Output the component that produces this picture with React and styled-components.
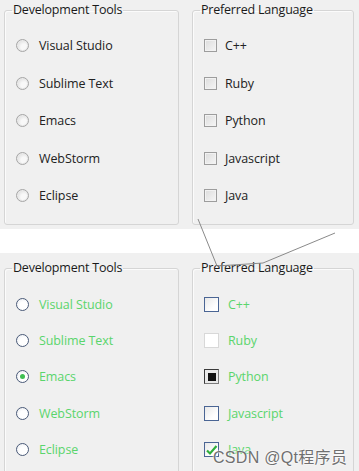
import React from "react";
import styled, { createGlobalStyle, css } from "styled-components";

const Global = createGlobalStyle`
  html, body {
    margin: 0;
    padding: 0;
    background: #ffffff;
  }
  body {
    font-family: "Open Sans", "Liberation Sans", sans-serif;
  }
`;

const Page = styled.div`
  position: relative;
  width: 359px;
  height: 471px;
  overflow: hidden;
  background: #ffffff;
`;

const Panel = styled.div`
  background: #f0f0f0;
  height: ${(p) => p.h}px;
  padding: ${(p) => p.top}px 6px 0 4px;
  box-sizing: border-box;
  display: grid;
  grid-template-columns: 175px 162px;
  column-gap: 13px;
  align-items: start;
`;

const Gap = styled.div`
  height: 24px;
  background: #ffffff;
`;

const Group = styled.fieldset`
  margin: 0;
  min-width: 0;
  border: 1px solid #d5d5d5;
  border-radius: 3px;
  box-shadow: inset 1px 1px 0 #fbfbfb;
  padding: ${(p) => p.pt}px 0 ${(p) => p.pb}px 7px;
`;

const Title = styled.legend`
  padding: 0 1px;
  font-size: 12.5px;
  line-height: 16px;
  color: #1a1a1a;
  letter-spacing: -0.2px;
`;

const List = styled.div`
  display: flex;
  flex-direction: column;
`;

const Row = styled.div`
  height: ${(p) => p.rh}px;
  display: flex;
  align-items: center;
  gap: ${(p) => p.gap}px;
  padding-left: ${(p) => p.indent}px;
`;

const Label = styled.span`
  font-size: 12.5px;
  letter-spacing: -0.1px;
  color: ${(p) => (p.green ? "#5ad56c" : "#222222")};
`;

const Radio = styled.span`
  width: 13px;
  height: 13px;
  border-radius: 50%;
  box-sizing: border-box;
  display: flex;
  align-items: center;
  justify-content: center;
  flex: none;
  ${(p) =>
    p.modern
      ? css`
          border: 1.5px solid #4a5a78;
          background: radial-gradient(circle at 60% 60%, #ffffff 40%, #e6e9ee 100%);
        `
      : css`
          border: 1px solid #a6a6a6;
          background: radial-gradient(circle at 65% 65%, #f8f8f8 30%, #d2d2d2 100%);
          box-shadow: inset 0 0 0 1px #eaeaea;
        `}
`;

const Dot = styled.span`
  width: 5px;
  height: 5px;
  border-radius: 50%;
  background: #3fbf52;
`;

const boxStyles = {
  plain: css`
    border: 1px solid #9d9d9d;
    background: linear-gradient(135deg, #dcdcdc 0%, #f6f6f6 100%);
    box-shadow: inset 0 0 0 1px #f2f2f2;
  `,
  blue: css`
    border: 1.5px solid #4a6594;
    background: linear-gradient(135deg, #e8e8e8 0%, #ffffff 70%);
  `,
  faint: css`
    border: 1px solid #d8d8d8;
    background: #ffffff;
  `,
  partial: css`
    border: 1px solid #7c7c7c;
    border-top-color: #3a3a3a;
    border-left-color: #3a3a3a;
    background: #e9e9e9;
  `,
};

const Check = styled.span`
  position: relative;
  width: ${(p) => (p.small ? 13 : 15)}px;
  height: ${(p) => (p.small ? 13 : 15)}px;
  box-sizing: border-box;
  flex: none;
  display: flex;
  align-items: center;
  justify-content: center;
  ${(p) => boxStyles[p.kind]}
`;

const Fill = styled.span`
  width: 8px;
  height: 8px;
  background: #111111;
`;

const Tick = styled.svg`
  position: absolute;
  left: 0px;
  top: 1px;
  width: 13px;
  height: 12px;
`;

const Pointer = styled.svg`
  position: absolute;
  left: 0;
  top: 0;
  width: 359px;
  height: 471px;
  pointer-events: none;
`;

const Watermark = styled.div`
  position: absolute;
  left: 213px;
  top: 444px;
  font-family: "Liberation Sans", "Noto Sans CJK SC", sans-serif;
  font-size: 16px;
  color: #707070;
  letter-spacing: 0.3px;
  text-shadow: 0 0 2px #ffffff, 0 0 2px #ffffff;
`;

const tools = ["Visual Studio", "Sublime Text", "Emacs", "WebStorm", "Eclipse"];
const langs = ["C++", "Ruby", "Python", "Javascript", "Java"];
const modernBoxes = ["blue", "faint", "partial", "blue", "blue"];

export default function App() {
  return (
    <Page>
      <Global />
      <Panel h={229} top={2}>
        <Group pt={9} pb={9}>
          <Title>Development Tools</Title>
          <List>
            {tools.map((t) => (
              <Row key={t} rh={37.5} gap={10} indent={4}>
                <Radio />
                <Label>{t}</Label>
              </Row>
            ))}
          </List>
        </Group>
        <Group pt={9} pb={9}>
          <Title>Preferred Language</Title>
          <List>
            {langs.map((l) => (
              <Row key={l} rh={37.5} gap={8} indent={4}>
                <Check small kind="plain" />
                <Label>{l}</Label>
              </Row>
            ))}
          </List>
        </Group>
      </Panel>
      <Gap />
      <Panel h={218} top={7}>
        <Group pt={10} pb={30}>
          <Title>Development Tools</Title>
          <List>
            {tools.map((t) => (
              <Row key={t} rh={36.3} gap={10} indent={4}>
                <Radio modern>{t === "Emacs" && <Dot />}</Radio>
                <Label green>{t}</Label>
              </Row>
            ))}
          </List>
        </Group>
        <Group pt={10} pb={30}>
          <Title>Preferred Language</Title>
          <List>
            {langs.map((l, i) => (
              <Row key={l} rh={36.3} gap={9} indent={4}>
                <Check kind={modernBoxes[i]}>
                  {l === "Python" && <Fill />}
                  {l === "Java" && (
                    <Tick viewBox="0 0 13 12">
                      <path d="M2 6.5 L5 9.5 L11.5 2" fill="none" stroke="#2fae3c" strokeWidth="2.2" />
                    </Tick>
                  )}
                </Check>
                <Label green>{l}</Label>
              </Row>
            ))}
          </List>
        </Group>
      </Panel>
      <Pointer viewBox="0 0 359 471">
        <path d="M198 219 L217 266 L263 263 L335 233" fill="none" stroke="#8a8a8a" strokeWidth="1" />
      </Pointer>
      <Watermark>CSDN @Qt程序员</Watermark>
    </Page>
  );
}
